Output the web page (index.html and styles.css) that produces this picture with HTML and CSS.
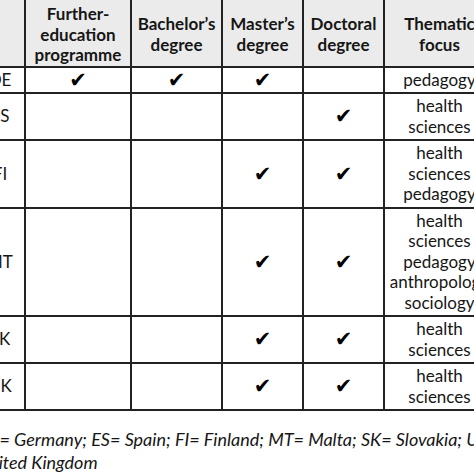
FILE: index.html
```html
<!DOCTYPE html>
<html lang="en">
<head>
<meta charset="utf-8">
<title>Programmes by country</title>
<link rel="stylesheet" href="styles.css">
</head>
<body>
<div class="page">
  <table class="grid">
    <colgroup>
      <col class="c-country">
      <col class="c-fe">
      <col class="c-ba">
      <col class="c-ma">
      <col class="c-doc">
      <col class="c-focus">
    </colgroup>
    <thead>
      <tr>
        <th></th>
        <th>Further-<br>education<br>programme</th>
        <th>Bachelor’s<br>degree</th>
        <th>Master’s<br>degree</th>
        <th>Doctoral<br>degree</th>
        <th>Thematic<br>focus</th>
      </tr>
    </thead>
    <tbody>
      <tr>
        <td class="country">DE</td>
        <td class="mark">✔</td>
        <td class="mark">✔</td>
        <td class="mark">✔</td>
        <td class="mark"></td>
        <td class="focus">pedagogy</td>
      </tr>
      <tr>
        <td class="country">ES</td>
        <td class="mark"></td>
        <td class="mark"></td>
        <td class="mark"></td>
        <td class="mark">✔</td>
        <td class="focus">health<br>sciences</td>
      </tr>
      <tr>
        <td class="country">FI</td>
        <td class="mark"></td>
        <td class="mark"></td>
        <td class="mark">✔</td>
        <td class="mark">✔</td>
        <td class="focus">health<br>sciences<br>pedagogy</td>
      </tr>
      <tr>
        <td class="country">MT</td>
        <td class="mark"></td>
        <td class="mark"></td>
        <td class="mark">✔</td>
        <td class="mark">✔</td>
        <td class="focus">health<br>sciences<br>pedagogy<br>anthropology<br>sociology</td>
      </tr>
      <tr>
        <td class="country">SK</td>
        <td class="mark"></td>
        <td class="mark"></td>
        <td class="mark">✔</td>
        <td class="mark">✔</td>
        <td class="focus">health<br>sciences</td>
      </tr>
      <tr>
        <td class="country">UK</td>
        <td class="mark"></td>
        <td class="mark"></td>
        <td class="mark">✔</td>
        <td class="mark">✔</td>
        <td class="focus">health<br>sciences</td>
      </tr>
    </tbody>
  </table>
  <p class="caption">DE= Germany; ES= Spain; FI= Finland; MT= Malta; SK= Slovakia; UK=<br>United Kingdom</p>
</div>
</body>
</html>
```

FILE: styles.css
```css
html, body {
  margin: 0;
  padding: 0;
  background: #ffffff;
}

body {
  width: 474px;
  height: 474px;
  overflow: hidden;
  font-family: Lato, "Open Sans", "DejaVu Sans", sans-serif;
  color: #161616;
}

.page {
  width: 600px;
  margin-left: -22px;
  margin-top: -2px;
}

.grid {
  border-collapse: collapse;
  table-layout: fixed;
  width: 516px;
  font-size: 17px;
  line-height: 20.5px;
}

.c-country { width: 46px; }
.c-fe { width: 106px; }
.c-ba { width: 91px; }
.c-ma { width: 81px; }
.c-doc { width: 81px; }
.c-focus { width: 111px; }

.grid th,
.grid td {
  border: 2px solid #222222;
  text-align: center;
  vertical-align: middle;
  padding: 2px 0;
  white-space: nowrap;
  overflow: hidden;
}

.grid th {
  background: #ebebeb;
  font-weight: 700;
  padding: 4px 0 0;
}

.grid .country {
  padding-right: 4px;
  font-size: 17px;
}

.mark {
  font-family: "DejaVu Sans", sans-serif;
  font-size: 21px;
  color: #000000;
}

.caption {
  margin: 17px 0 0 -1px;
  font-size: 18px;
  line-height: 23px;
  font-style: italic;
  white-space: nowrap;
}
```
